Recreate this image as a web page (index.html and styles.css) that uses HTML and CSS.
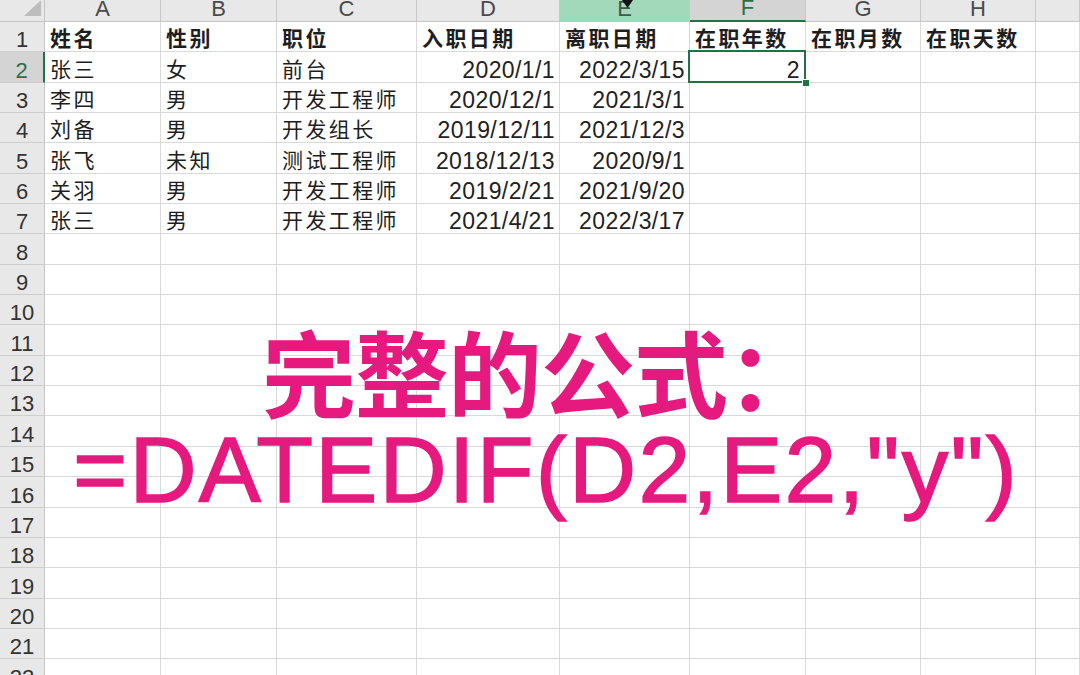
FILE: index.html
```html
<!DOCTYPE html>
<html lang="zh-CN">
<head>
<meta charset="utf-8">
<title>DATEDIF</title>
<link rel="stylesheet" href="styles.css">
</head>
<body>
<div class="sheet">
  <div class="corner"><svg class="tri" width="20" height="17" viewBox="0 0 20 17"><polygon points="19,0 19,16 2,16" fill="#bdbdbd"/></svg></div>
  <div class="ch">A</div>
  <div class="ch">B</div>
  <div class="ch">C</div>
  <div class="ch">D</div>
  <div class="ch ch-hl">E<svg class="cursor" width="12" height="9" viewBox="0 0 12 9"><polygon points="0,0 11,0 5.5,8" fill="#111"/></svg></div>
  <div class="ch ch-sel">F</div>
  <div class="ch">G</div>
  <div class="ch">H</div>
  <div class="ch"></div>

  <div class="rh">1</div>
  <div class="c t b">姓名</div><div class="c t b">性别</div><div class="c t b">职位</div><div class="c t b">入职日期</div><div class="c t b">离职日期</div><div class="c t b">在职年数</div><div class="c t b">在职月数</div><div class="c t b">在职天数</div><div class="c"></div>

  <div class="rh rh-sel">2</div>
  <div class="c t">张三</div><div class="c t">女</div><div class="c t">前台</div><div class="c n">2020/1/1</div><div class="c n">2022/3/15</div><div class="c n active">2</div><div class="c"></div><div class="c"></div><div class="c"></div>

  <div class="rh">3</div>
  <div class="c t">李四</div><div class="c t">男</div><div class="c t">开发工程师</div><div class="c n">2020/12/1</div><div class="c n">2021/3/1</div><div class="c"></div><div class="c"></div><div class="c"></div><div class="c"></div>

  <div class="rh">4</div>
  <div class="c t">刘备</div><div class="c t">男</div><div class="c t">开发组长</div><div class="c n">2019/12/11</div><div class="c n">2021/12/3</div><div class="c"></div><div class="c"></div><div class="c"></div><div class="c"></div>

  <div class="rh">5</div>
  <div class="c t">张飞</div><div class="c t">未知</div><div class="c t">测试工程师</div><div class="c n">2018/12/13</div><div class="c n">2020/9/1</div><div class="c"></div><div class="c"></div><div class="c"></div><div class="c"></div>

  <div class="rh">6</div>
  <div class="c t">关羽</div><div class="c t">男</div><div class="c t">开发工程师</div><div class="c n">2019/2/21</div><div class="c n">2021/9/20</div><div class="c"></div><div class="c"></div><div class="c"></div><div class="c"></div>

  <div class="rh">7</div>
  <div class="c t">张三</div><div class="c t">男</div><div class="c t">开发工程师</div><div class="c n">2021/4/21</div><div class="c n">2022/3/17</div><div class="c"></div><div class="c"></div><div class="c"></div><div class="c"></div>

  <div class="rh">8</div><div class="c"></div><div class="c"></div><div class="c"></div><div class="c"></div><div class="c"></div><div class="c"></div><div class="c"></div><div class="c"></div><div class="c"></div>
  <div class="rh">9</div><div class="c"></div><div class="c"></div><div class="c"></div><div class="c"></div><div class="c"></div><div class="c"></div><div class="c"></div><div class="c"></div><div class="c"></div>
  <div class="rh">10</div><div class="c"></div><div class="c"></div><div class="c"></div><div class="c"></div><div class="c"></div><div class="c"></div><div class="c"></div><div class="c"></div><div class="c"></div>
  <div class="rh">11</div><div class="c"></div><div class="c"></div><div class="c"></div><div class="c"></div><div class="c"></div><div class="c"></div><div class="c"></div><div class="c"></div><div class="c"></div>
  <div class="rh">12</div><div class="c"></div><div class="c"></div><div class="c"></div><div class="c"></div><div class="c"></div><div class="c"></div><div class="c"></div><div class="c"></div><div class="c"></div>
  <div class="rh">13</div><div class="c"></div><div class="c"></div><div class="c"></div><div class="c"></div><div class="c"></div><div class="c"></div><div class="c"></div><div class="c"></div><div class="c"></div>
  <div class="rh">14</div><div class="c"></div><div class="c"></div><div class="c"></div><div class="c"></div><div class="c"></div><div class="c"></div><div class="c"></div><div class="c"></div><div class="c"></div>
  <div class="rh">15</div><div class="c"></div><div class="c"></div><div class="c"></div><div class="c"></div><div class="c"></div><div class="c"></div><div class="c"></div><div class="c"></div><div class="c"></div>
  <div class="rh">16</div><div class="c"></div><div class="c"></div><div class="c"></div><div class="c"></div><div class="c"></div><div class="c"></div><div class="c"></div><div class="c"></div><div class="c"></div>
  <div class="rh">17</div><div class="c"></div><div class="c"></div><div class="c"></div><div class="c"></div><div class="c"></div><div class="c"></div><div class="c"></div><div class="c"></div><div class="c"></div>
  <div class="rh">18</div><div class="c"></div><div class="c"></div><div class="c"></div><div class="c"></div><div class="c"></div><div class="c"></div><div class="c"></div><div class="c"></div><div class="c"></div>
  <div class="rh">19</div><div class="c"></div><div class="c"></div><div class="c"></div><div class="c"></div><div class="c"></div><div class="c"></div><div class="c"></div><div class="c"></div><div class="c"></div>
  <div class="rh">20</div><div class="c"></div><div class="c"></div><div class="c"></div><div class="c"></div><div class="c"></div><div class="c"></div><div class="c"></div><div class="c"></div><div class="c"></div>
  <div class="rh">21</div><div class="c"></div><div class="c"></div><div class="c"></div><div class="c"></div><div class="c"></div><div class="c"></div><div class="c"></div><div class="c"></div><div class="c"></div>
  <div class="rh">22</div><div class="c"></div><div class="c"></div><div class="c"></div><div class="c"></div><div class="c"></div><div class="c"></div><div class="c"></div><div class="c"></div><div class="c"></div>
</div>

<div class="caption">
  <div class="l1">完整的公式：</div>
  <div class="l2">=DATEDIF(D2,E2,"y")</div>
</div>
</body>
</html>
```

FILE: styles.css
```css
html, body {
  margin: 0;
  padding: 0;
  background: #ffffff;
  overflow: hidden;
  width: 1080px;
  height: 675px;
}

body {
  position: relative;
  font-family: "Liberation Sans", "Noto Sans CJK SC", sans-serif;
  color: #222;
}

.sheet {
  display: grid;
  grid-template-columns: 45px 116px 116px 140px 143px 130px 116px 115px 115px 1fr;
  grid-template-rows: 22px repeat(22, 30.35px);
  width: 1080px;
}

.sheet > div {
  box-sizing: border-box;
  border-right: 1px solid #d9d9d9;
  border-bottom: 1px solid #d9d9d9;
  overflow: hidden;
  white-space: nowrap;
}

.corner {
  background: #e8e8e8;
  position: relative;
  display: flex;
  justify-content: flex-end;
  align-items: flex-start;
  padding-right: 2px;
}
.sheet > .corner { border-right: 1px solid #c4c4c4; border-bottom: 1px solid #c4c4c4; }

.ch {
  background: #e8e8e8;
  color: #4a4a4a;
  font-size: 22px;
  line-height: 22px;
  display: flex;
  justify-content: center;
  align-items: flex-end;
  padding-bottom: 1px;
  position: relative;
}
.sheet > .ch { border-right: 1px solid #c8c8c8; border-bottom: 1px solid #c4c4c4; }

.sheet > .ch-hl {
  background: #a3d9bb;
  color: #3d5a4a;
  overflow: visible;
}
.sheet > .ch-sel {
  background: #d4d4d4;
  color: #2f6e4d;
  border-bottom: 2px solid #217346;
}

.cursor {
  position: absolute;
  left: 62px;
  top: 0;
}

.rh {
  background: #e8e8e8;
  color: #333;
  font-size: 22px;
  line-height: 23px;
  display: flex;
  justify-content: center;
  align-items: flex-end;
  padding-bottom: 0;
}
.sheet > .rh { border-right: 1px solid #c4c4c4; border-bottom: 1px solid #cdcdcd; }
.sheet > .rh-sel {
  background: #d4d4d4;
  color: #2f6e4d;
  border-right: 2px solid #217346;
}

.c {
  display: flex;
  align-items: flex-end;
}

.t {
  font-family: "Noto Sans CJK SC", sans-serif;
  font-size: 21px;
  line-height: 21px;
  letter-spacing: 2.4px;
  padding: 0 4px 3px 5px;
  color: #1e1e1e;
}

.b { font-weight: 700; }

.n {
  justify-content: flex-end;
  font-size: 23px;
  line-height: 23px;
  letter-spacing: 0.4px;
  padding: 0 4px 0 4px;
  color: #222;
}

.sheet > .active {
  position: relative;
  overflow: visible;
  padding-right: 5px;
}
.active::after {
  content: "";
  position: absolute;
  left: -2px;
  top: -2px;
  right: -1px;
  bottom: -1px;
  border: 2px solid #217346;
}
.active::before {
  content: "";
  position: absolute;
  right: -5px;
  bottom: -5px;
  width: 6px;
  height: 6px;
  background: #217346;
  border: 1px solid #ffffff;
  z-index: 2;
}

.caption {
  position: absolute;
  left: 0;
  top: 320px;
  color: #e5197e;
  text-shadow: 0 0 2px rgba(255, 255, 255, 0.9);
}

.l1 {
  font-family: "Noto Sans CJK SC", sans-serif;
  font-weight: 700;
  font-size: 94px;
  line-height: 100px;
  padding-left: 262px;
  letter-spacing: -1px;
  white-space: nowrap;
}

.l2 {
  font-family: "Liberation Sans", Arial, sans-serif;
  font-weight: 400;
  font-size: 93px;
  line-height: 100px;
  padding-left: 73px;
  white-space: nowrap;
  letter-spacing: 2.2px;
  -webkit-text-stroke: 1.5px #e5197e;
}
```
